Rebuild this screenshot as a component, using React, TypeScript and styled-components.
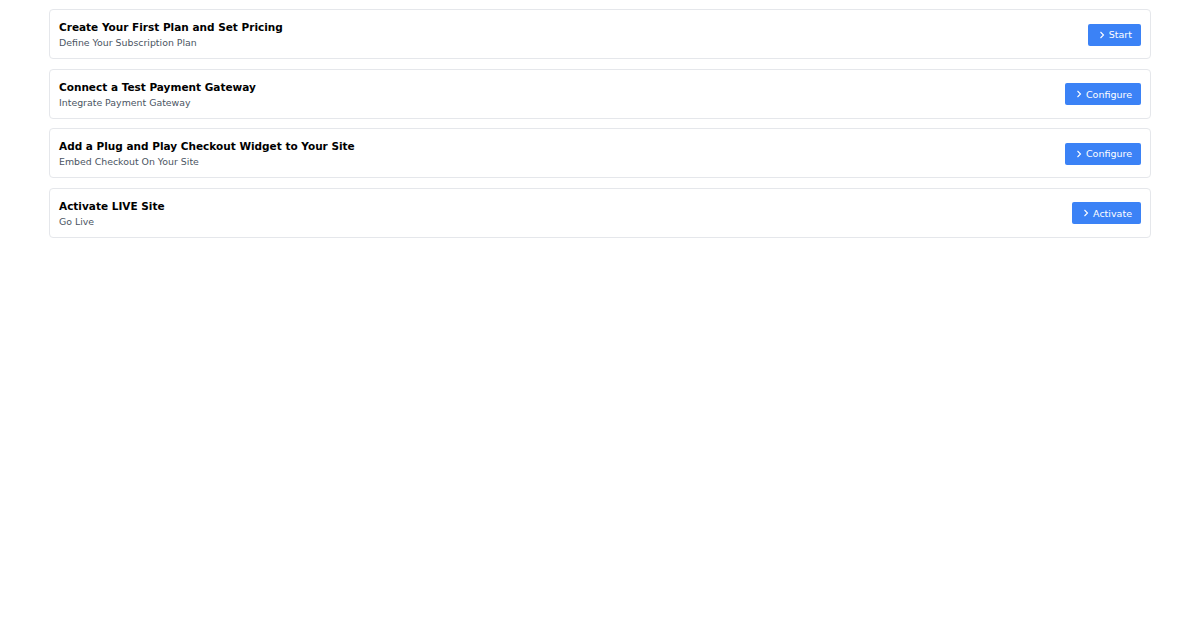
import React from 'react';
import styled, { createGlobalStyle } from 'styled-components';

const GlobalStyle = createGlobalStyle`
    body {
        margin: 0;
        background: #ffffff;
        font-family: 'DejaVu Sans', sans-serif;
    }
`;

const Container = styled.main`
    padding: 9px 49px;
    display: flex;
    flex-direction: column;
    gap: 9.67px;
`;

const Step = styled.div`
    display: flex;
    align-items: center;
    justify-content: space-between;
    border: 1px solid #e5e7eb;
    border-radius: 4px;
    padding: 10px 9px 9px 9px;
`;

const Info = styled.div`
    display: flex;
    flex-direction: column;
    gap: 2px;
`;

const Title = styled.h3`
    margin: 0;
    font-size: 10.5px;
    font-weight: 700;
    color: #000000;
    line-height: 14px;
`;

const Subtitle = styled.p`
    margin: 0;
    font-size: 9.4px;
    color: #4b5563;
    line-height: 13px;
`;

const Button = styled.button`
    display: flex;
    align-items: center;
    gap: 3px;
    height: 22px;
    padding: 0 9px 0 10px;
    background: #3b82f6;
    color: #ffffff;
    border: none;
    border-radius: 2px;
    font-family: inherit;
    font-size: 9.5px;
    cursor: pointer;
`;

const Chevron = () => (
    <svg width="8" height="8" viewBox="0 0 8 8" fill="none">
        <path d="M2.5 1 L5.5 4 L2.5 7" stroke="#ffffff" strokeWidth="1.1" />
    </svg>
);

interface IStep {
    title: string;
    subtitle: string;
    action: string;
}

const steps: IStep[] = [
    { title: 'Create Your First Plan and Set Pricing', subtitle: 'Define Your Subscription Plan', action: 'Start' },
    { title: 'Connect a Test Payment Gateway', subtitle: 'Integrate Payment Gateway', action: 'Configure' },
    { title: 'Add a Plug and Play Checkout Widget to Your Site', subtitle: 'Embed Checkout On Your Site', action: 'Configure' },
    { title: 'Activate LIVE Site', subtitle: 'Go Live', action: 'Activate' },
];

function App() {
    return (
        <>
            <GlobalStyle />
            <Container>
                {steps.map((step) => (
                    <Step key={step.title}>
                        <Info>
                            <Title>{step.title}</Title>
                            <Subtitle>{step.subtitle}</Subtitle>
                        </Info>
                        <Button>
                            <Chevron />
                            {step.action}
                        </Button>
                    </Step>
                ))}
            </Container>
        </>
    );
}

export default App;
